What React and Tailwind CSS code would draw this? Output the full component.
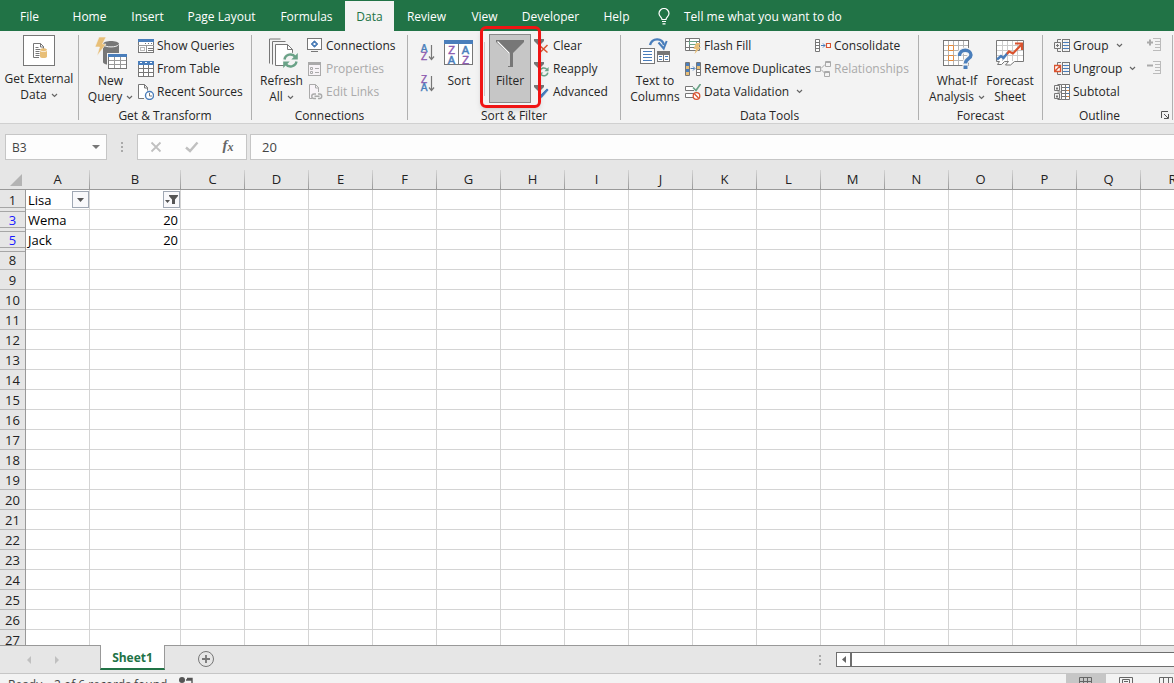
import React from 'react';

const GRAY = '#777777';
const BLUE = '#4a7ebb';
const GREEN = '#6aa287';
const RED = '#d9532f';
const GOLD = '#e8bf78';
const PURPLE = '#8e5bb0';

function Svg({ w = 16, h = 16, children, className = '' }) {
  return (
    <svg
      width={w}
      height={h}
      viewBox={`0 0 ${w} ${h}`}
      fill="none"
      aria-hidden="true"
      className={`block shrink-0 ${className}`}
    >
      {children}
    </svg>
  );
}

function Chevron({ className = '' }) {
  return (
    <Svg w={7} h={5} className={className}>
      <path d="M1 1l2.5 2.4L6 1" stroke="#666" strokeWidth="1.2" />
    </Svg>
  );
}

/* ---------- large ribbon icons ---------- */

function ExternalDataIcon() {
  return (
    <Svg w={32} h={32}>
      <rect x="0.5" y="0.5" width="31" height="30" fill="#fff" stroke={GRAY} />
      <path d="M16 22.5h-5.500v-14h7l3 3v2.500M17.500 8.500v3.500h3.500" stroke={GRAY} />
      <path d="M12.500 12.500h3M12.500 14.500h5M12.500 16.500h4M12.500 18.500h4M12.500 20.500h4" stroke={GRAY} />
      <path d="M17 15c0-2.500 7-2.500 7 0v6.500c0 2-7 2-7 0z" fill={GOLD} />
      <path d="M17 15.200c0 1.800 7 1.800 7 0" stroke="#fff" strokeWidth=".8" />
    </Svg>
  );
}

function NewQueryIcon() {
  return (
    <Svg w={32} h={32}>
      <path d="M8 7c0-4 16-4 16 0v18c0 4-16 4-16 0z" fill={GRAY} />
      <path d="M8.500 7.500c1 3.200 14 3.200 15 0" stroke="#f3f3f3" />
      <path d="M4 0h7L7.500 7H11L2 19l2.500-9H0z" fill={GOLD} stroke="#f3f3f3" strokeWidth=".6" />
      <rect x="12" y="16" width="20" height="16" fill="#f3f3f3" />
      <rect x="13.500" y="19.500" width="18" height="12" fill="#fff" stroke={GRAY} />
      <path d="M13 17h19v3H13z" fill={BLUE} />
      <path d="M19.500 20v11M25.500 20v11M14 23.500h17M14 27.500h17" stroke="#999" />
    </Svg>
  );
}

function RefreshArrows({ x = 0, y = 0, s = 1 }) {
  return (
    <g transform={`translate(${x} ${y}) scale(${s})`}>
      <path d="M1.500 6.500C2.500 1 9.500 0 12.300 4M13.500 8.500C12.500 14 5.500 15 2.700 11" stroke={GREEN} strokeWidth="2.400" />
      <path d="M14.800 0v6.500H8.300zM.2 15V8.500h6.500z" fill={GREEN} />
    </g>
  );
}

function RefreshIcon() {
  return (
    <Svg w={32} h={32}>
      <path d="M3.500 26.500v-24.500h11M6.500 27.500V4.500h13" stroke={GRAY} />
      <path d="M9.500 7.500h12l5 5v16h-17z" fill="#fff" stroke={GRAY} />
      <path d="M21.500 7.500v5h5" stroke={GRAY} />
      <circle cx="24.500" cy="23.500" r="8" fill="#f3f3f3" />
      <RefreshArrows x={17} y={16} />
    </Svg>
  );
}

function SortIcon() {
  return (
    <Svg w={30} h={32}>
      <rect x="0.5" y="3.500" width="28" height="24" fill="#fff" stroke={GRAY} />
      <path d="M0 3h29v4H0z" fill={BLUE} />
      <path d="M14.500 7v21" stroke={GRAY} />
      <g fontFamily="Liberation Sans, sans-serif" fontSize="11" strokeWidth=".5" textAnchor="middle">
        <text x="7.500" y="17" fill={PURPLE} stroke={PURPLE}>Z</text>
        <text x="7.500" y="26.500" fill={BLUE} stroke={BLUE}>A</text>
        <text x="21.500" y="17" fill={BLUE} stroke={BLUE}>A</text>
        <text x="21.500" y="26.500" fill={PURPLE} stroke={PURPLE}>Z</text>
      </g>
    </Svg>
  );
}

function SortOrderIcon({ first, second, firstColor, secondColor }) {
  return (
    <Svg w={16} h={18}>
      <g fontFamily="Liberation Sans, sans-serif" fontSize="10" strokeWidth=".4" textAnchor="middle">
        <text x="4" y="8" fill={firstColor} stroke={firstColor}>{first}</text>
        <text x="4" y="16" fill={secondColor} stroke={secondColor}>{second}</text>
      </g>
      <path d="M11.500 1v14M9 12.500l2.500 3 2.500-3" stroke={GRAY} strokeWidth="1.200" />
    </Svg>
  );
}

function FilterIcon() {
  return (
    <Svg w={28} h={32}>
      <path d="M0 3h28v2L17 16v14h-5V16L0 5z" fill={GRAY} />
      <path d="M1.500 4.500L13 16v13" stroke="#fff" strokeWidth="1.200" />
    </Svg>
  );
}

function TextToColumnsIcon() {
  return (
    <Svg w={32} h={32}>
      <path d="M11 8C13 1 23 0 25 8" stroke={BLUE} strokeWidth="2.400" />
      <path d="M19.500 5.500L24.700 11.500l3-7.500" stroke={BLUE} strokeWidth="2" />
      <rect x="1.500" y="11.500" width="14" height="15" fill="#fff" stroke={GRAY} />
      <path d="M4 14.500h9M4 17.500h9M4 20.500h9M4 23.500h9" stroke={BLUE} />
      <rect x="18.500" y="14.500" width="12" height="10" fill="#fff" stroke={GRAY} />
      <path d="M18 14h13v4H18zM24 17h1v8h-1z" fill={GRAY} />
      <path d="M20 19.500h3M26 19.500h3M20 22.500h3M26 22.500h3" stroke={BLUE} />
    </Svg>
  );
}

function WhatIfIcon() {
  return (
    <Svg w={32} h={32}>
      <rect x="2.500" y="3.500" width="25" height="25" fill="#fff" stroke={GRAY} />
      <path d="M7.500 4v24M12.500 4v24M17.500 4v24M22.500 4v24M3 8.500h24M3 13.500h24M3 18.500h24M3 23.500h24" stroke="#b4b4b4" />
      <path d="M7.500 8.500h5v5h-5zM7.500 18.500h5v5h-5z" fill="#fff" stroke="#e58a3c" />
      <path d="M18.500 19c0-8 11-7 11-1 0 4-5 3.500-5 8.500M24.500 27v5" stroke="#f3f3f3" strokeWidth="6" />
      <path d="M18.500 19c0-8 11.500-7 11.500-1 0 4-5.500 3.500-5.500 8.500" stroke={BLUE} strokeWidth="3.400" />
      <path d="M22.500 28.500h4V32h-4z" fill={BLUE} />
    </Svg>
  );
}

function ForecastIcon() {
  return (
    <Svg w={32} h={32}>
      <path d="M2.500 24.500V3.500h27V24.500H20.500l-4 3.500h-5l3-3.500h-4l-3 3h-4l2-3z" fill="#fff" stroke={GRAY} />
      <path d="M8.500 4v20M13.500 4v20M18.500 4v20M23.500 4v20M3 8.500h26M3 13.500h26M3 18.500h26" stroke="#ccc" />
      <path d="M3 22.500l4-3.500 2.500 2L13.500 16" stroke={BLUE} strokeWidth="2.400" />
      <path d="M13 17l2-2.500 4 2L27 8M21 6.500h7V13" stroke={RED} strokeWidth="2.200" />
    </Svg>
  );
}

/* ---------- small ribbon icons ---------- */

function ShowQueriesIcon() {
  return (
    <Svg>
      <rect x="0.500" y="1.500" width="15" height="13" fill="#fff" stroke={GRAY} />
      <path d="M0 1h16v3H0z" fill={BLUE} />
      <path d="M8.500 7v7M0 7.500h16" stroke="#999" />
      <path d="M7 5.500h1M10 5.500h1M13 5.500h1M10 10.500h5M10 12.500h5" stroke={GRAY} />
      <rect x="2.500" y="9.500" width="4" height="3" stroke="#bbb" />
    </Svg>
  );
}

function FromTableIcon() {
  return (
    <Svg>
      <rect x="0.500" y="0.500" width="15" height="15" fill="#fff" stroke={GRAY} />
      <path d="M5.500 4v11M10.500 4v11M0 7.500h16M0 11.500h16" stroke={GRAY} />
      <path d="M0 0h16v4H0z" fill={BLUE} />
      <path d="M2 1.500h2M7 1.500h2M12 1.500h2" stroke="#fff" />
    </Svg>
  );
}

function RecentSourcesIcon() {
  return (
    <Svg>
      <path d="M6 14.500H.500V.500h6l3 3v3M6.500.500V4H10" fill="#fff" stroke={GRAY} />
      <circle cx="11.500" cy="11.500" r="4" fill="#fff" stroke={BLUE} strokeWidth="1.400" />
      <path d="M11.500 9v3h2.500" stroke={GRAY} />
    </Svg>
  );
}

function ConnectionsIcon() {
  return (
    <Svg>
      <rect x="0.500" y="0.500" width="14" height="11" fill="#fff" stroke={GRAY} />
      <path d="M4 13.500h7M7.500 3l3 3-3 3-3-3z" stroke={GRAY} />
      <path d="M7.500 3.500L10 6 7.500 8.500 5 6z" fill="#fff" stroke={BLUE} strokeWidth="1.600" />
    </Svg>
  );
}

function PropertiesIcon() {
  return (
    <Svg>
      <rect x="1.500" y="1.500" width="12" height="13" fill="#f7f3f7" stroke="#aaa" />
      <path d="M1 1h13v3H1z" fill="#aaa" />
      <path d="M3.500 6.500h2v2h-2zM3.500 10.500h2v2h-2zM8 7.500h4M8 11.500h4" stroke="#aaa" />
    </Svg>
  );
}

function EditLinksIcon() {
  return (
    <Svg>
      <path d="M5 14.500H2.500V.500h6l3 3V8M8.500.500V4H12" fill="#f8f4f8" stroke="#aaa" />
      <path d="M9 10H7a2 2 0 000 4.500h2M11 10h1.500a2 2 0 010 4.500H11M7.500 12.300h5" stroke="#aaa" strokeWidth="1.400" />
    </Svg>
  );
}

function Funnel() {
  return <path d="M-1 1h11v2L6 7v7H4V7L-1 2z" fill={GRAY} />;
}

function ClearIcon() {
  return (
    <Svg>
      <Funnel />
      <path d="M5.500 7.500l8 7M13.500 7l-8 8" stroke={RED} strokeWidth="1.500" />
    </Svg>
  );
}

function ReapplyIcon() {
  return (
    <Svg>
      <Funnel />
      <circle cx="10" cy="10.500" r="5" fill="#f3f3f3" />
      <RefreshArrows x={5} y={6} s={0.65} />
    </Svg>
  );
}

function AdvancedIcon() {
  return (
    <Svg>
      <Funnel />
      <path d="M5 15l1-4 7-7 2 2-7 8z" fill={BLUE} stroke="#f3f3f3" strokeWidth=".7" />
    </Svg>
  );
}

function FlashFillIcon() {
  return (
    <Svg>
      <path d="M.500.500h14v12H.500zM4.500 1v11M1 3.500h13M1 9.500h9" fill="#fff" stroke={GRAY} />
      <rect x="4.500" y="3.500" width="7" height="3" fill="#fff" stroke={GREEN} />
      <path d="M11 5h4.500L13.500 9H16l-6.500 7L11 11H8.500z" fill={GOLD} />
    </Svg>
  );
}

function RemoveDuplicatesIcon() {
  return (
    <Svg>
      <path d="M.500 1.500h4v13h-4zM11.500 1.500h4v13h-4z" fill="#fff" stroke={GRAY} />
      <path d="M1 2h3v3H1zM1 8h3v3H1zM12 2h3v3h-3z" fill={BLUE} />
      <path d="M1 5h3v3H1zM1 11h3v3H1zM12 5h3v3h-3z" fill={GOLD} />
      <path d="M12 8.500h3M12 11.500h3" stroke={GRAY} />
      <path d="M5.500 7.500h4M8 5.500l2 2-2 2" stroke={BLUE} />
    </Svg>
  );
}

function DataValidationIcon() {
  return (
    <Svg>
      <path d="M9 6.500H.500v-4H8M8 13.500H.500v-4H9" fill="#fff" stroke={GRAY} />
      <path d="M8 3.500l3 3L15.500 0" stroke={GREEN} strokeWidth="1.700" />
      <circle cx="11.500" cy="12" r="3.300" fill="#fff" stroke={RED} strokeWidth="1.300" />
      <path d="M9.500 10l4 4" stroke={RED} strokeWidth="1.300" />
    </Svg>
  );
}

function ConsolidateIcon() {
  return (
    <Svg>
      <path d="M.500 1.500h4v12h-4zM.500 4.500h4M.500 7.500h4M.500 10.500h4" fill="#fff" stroke={GRAY} />
      <path d="M6 7.500h4M8 5.500l2 2-2 2" stroke={BLUE} />
      <path d="M11.500 5.500h4v4h-4z" fill="#fff" stroke={RED} strokeWidth="1.200" />
    </Svg>
  );
}

function RelationshipsIcon() {
  return (
    <Svg>
      <path d="M.500 5.500h5v5h-5zM10.500 .500h5v5h-5zM9.500 10.500h5v5h-5zM6 7.500l4-4M6 8.500l4 4" stroke="#aaa" />
      <path d="M.500 6.500h5M10.500 1.500h5M9.500 11.500h5" stroke="#aaa" />
    </Svg>
  );
}

function OutlineList() {
  return (
    <>
      <rect x="8.500" y="1.500" width="7" height="12" fill="#fff" stroke={GRAY} />
      <path d="M9 4.500h6M9 7.500h6M9 10.500h6" stroke={BLUE} />
      <path d="M10 3h4M10 6h4M10 9h4M10 12h4" stroke="#ddd" />
      <path d="M7 1.500H3.500V4M3.500 11v2.500H7" stroke={GRAY} />
    </>
  );
}

function GroupIcon() {
  return (
    <Svg>
      <OutlineList />
      <path d="M.500 4.500h6v6h-6zM2 7.500h3M3.500 6v3" stroke={GRAY} />
    </Svg>
  );
}

function UngroupIcon() {
  return (
    <Svg>
      <OutlineList />
      <path d="M.500 4.500h6v6h-6zM1 10l5-5" fill="#fff" stroke={RED} strokeWidth="1.400" />
    </Svg>
  );
}

function SubtotalIcon() {
  return (
    <Svg>
      <path d="M.500 1.500h5v5h-5zM.500 9.500h5v5h-5zM2 4.500h2M3 3v3M2 12.500h2M3 11v3M3.500 .500h4M3.500 8h4M3.500 15.500h4" stroke={GRAY} />
      <path d="M7.500.500h8v15h-8zM11.500 1v14M8 3.500h7M8 6.500h7M8 9.500h7M8 12.500h7" fill="#fff" stroke={GRAY} />
      <path d="M13 3.500h2M13 9.500h2" stroke={BLUE} />
      <path d="M13 6.500h2M13 12.500h2" stroke="#e58a3c" />
    </Svg>
  );
}

function DetailIcon({ plus }) {
  return (
    <Svg>
      <path d={plus ? 'M0 4.500h6M3 1.500v6' : 'M0 4.500h6'} stroke="#aaa" strokeWidth="2" />
      <path d="M6 .500h8M8 3.500h6M8 6.500h6M8 9.500h6M6 12.500h8" stroke="#bbb" />
      <path d="M13.500 0v13" stroke="#bbb" />
    </Svg>
  );
}

/* ---------- ribbon building blocks ---------- */

function LargeButton({ icon, lines, caret, className = '' }) {
  return (
    <button type="button" className={`flex shrink-0 flex-col items-center whitespace-nowrap ${className}`}>
      {icon}
      <span className="mt-1 block leading-4">
        {lines.map((line, i) => (
          <span key={line} className="flex items-center justify-center">
            {line}
            {caret && i === lines.length - 1 ? <Chevron className="ml-1" /> : null}
          </span>
        ))}
      </span>
    </button>
  );
}

function SmallButton({ icon, label, caret, disabled }) {
  return (
    <button
      type="button"
      disabled={disabled}
      className="flex h-[23px] items-center gap-[3px] whitespace-nowrap disabled:text-[#aaaaaa]"
    >
      {icon}
      <span className="pt-px">{label}</span>
      {caret ? <Chevron className="ml-1" /> : null}
    </button>
  );
}

function RibbonGroup({ title, className = '', children, titleClass = '', corner }) {
  return (
    <section
      className={`flex shrink-0 flex-col ${className}`}
      aria-label={title || 'Get External Data'}
    >
      <div className="flex h-[69px]">{children}</div>
      <div className={`flex h-5 items-center justify-center pt-[5px] ${titleClass}`}>
        {title}
        {corner}
      </div>
    </section>
  );
}

function Divider() {
  return <div className="mt-px h-[85px] w-px shrink-0 bg-[#b0b0b0]" />;
}

const tabs = [
  ['File', 'w-[59px]'],
  ['Home', 'w-[61px]'],
  ['Insert', 'w-[55px]'],
  ['Page Layout', 'w-[93px]'],
  ['Formulas', 'w-[77px]'],
  ['Data', 'w-[49px]'],
  ['Review', 'w-[65px]'],
  ['View', 'w-[51px]'],
  ['Developer', 'w-[81px]'],
  ['Help', 'w-[51px]'],
];

function TabBar() {
  return (
    <nav className="flex h-[31px] shrink-0 overflow-hidden bg-[#217346] pt-px text-white">
      {tabs.map(([name, width]) => (
        <button
          key={name}
          type="button"
          className={`shrink-0 whitespace-nowrap pt-px ${width} ${name === 'Data' ? 'bg-[#f3f3f3] text-[#217346]' : ''}`}
        >
          {name}
        </button>
      ))}
      <button type="button" className="ml-4 flex shrink-0 items-center gap-[14px] whitespace-nowrap pt-px">
        <Svg w={12} h={17}>
          <path
            d="M4 11.500C4 9 1 8.500 1 5.500a5 5 0 0110 0c0 3-3 3.500-3 6zM4 13.500h4M4.500 15.800h3"
            stroke="#fff"
            strokeWidth="1.200"
          />
        </Svg>
        Tell me what you want to do
      </button>
    </nav>
  );
}

function Ribbon() {
  return (
    <div className="flex h-[93px] shrink-0 overflow-x-clip border-b border-[#d0d0d0] bg-[#f3f3f3] pt-[3px]">
      <RibbonGroup className="w-[78px]">
        <LargeButton className="w-full pt-px" icon={<ExternalDataIcon />} lines={['Get External', 'Data']} caret />
      </RibbonGroup>
      <Divider />
      <RibbonGroup title="Get & Transform" className="w-[172px]">
        <LargeButton className="w-[59px] pl-1 pt-[3px]" icon={<NewQueryIcon />} lines={['New', 'Query']} caret />
        <div>
          <SmallButton icon={<ShowQueriesIcon />} label="Show Queries" />
          <SmallButton icon={<FromTableIcon />} label="From Table" />
          <SmallButton icon={<RecentSourcesIcon />} label="Recent Sources" />
        </div>
      </RibbonGroup>
      <Divider />
      <RibbonGroup title="Connections" className="w-[155px]">
        <LargeButton className="w-[55px] pl-1 pt-[3px]" icon={<RefreshIcon />} lines={['Refresh', 'All']} caret />
        <div>
          <SmallButton icon={<ConnectionsIcon />} label="Connections" />
          <SmallButton icon={<PropertiesIcon />} label="Properties" disabled />
          <SmallButton icon={<EditLinksIcon />} label="Edit Links" disabled />
        </div>
      </RibbonGroup>
      <Divider />
      <RibbonGroup title="Sort & Filter" className="w-[212px]">
        <div className="ml-3 flex w-4 flex-col gap-[13px] pt-[10px]">
          <button type="button" aria-label="Sort A to Z">
            <SortOrderIcon first="A" second="Z" firstColor={BLUE} secondColor={PURPLE} />
          </button>
          <button type="button" aria-label="Sort Z to A">
            <SortOrderIcon first="Z" second="A" firstColor={PURPLE} secondColor={BLUE} />
          </button>
        </div>
        <LargeButton className="ml-2 w-[30px] pt-[3px]" icon={<SortIcon />} lines={['Sort']} />
        <div className="ml-[10px] mt-2 h-[54px] w-px bg-[#c8c8c8]" />
        <div className="relative ml-1 w-[42px]">
          <LargeButton
            className="h-[69px] w-full border border-[#8a8a8a] bg-[#c6c6c6] pt-[2px]"
            icon={<FilterIcon />}
            lines={['Filter']}
          />
          <div className="pointer-events-none absolute -left-[9px] -top-2 z-10 h-[82px] w-[61px] rounded-md border-[3px] border-[#f01414] shadow-md" />
        </div>
        <div className="ml-[3px]">
          <SmallButton icon={<ClearIcon />} label="Clear" />
          <SmallButton icon={<ReapplyIcon />} label="Reapply" />
          <SmallButton icon={<AdvancedIcon />} label="Advanced" />
        </div>
      </RibbonGroup>
      <Divider />
      <RibbonGroup title="Data Tools" className="w-[297px]">
        <LargeButton className="ml-2 w-[52px] pt-[3px]" icon={<TextToColumnsIcon />} lines={['Text to', 'Columns']} />
        <div className="ml-1 w-[130px]">
          <SmallButton icon={<FlashFillIcon />} label="Flash Fill" />
          <SmallButton icon={<RemoveDuplicatesIcon />} label="Remove Duplicates" />
          <SmallButton icon={<DataValidationIcon />} label="Data Validation" caret />
        </div>
        <div>
          <SmallButton icon={<ConsolidateIcon />} label="Consolidate" />
          <SmallButton icon={<RelationshipsIcon />} label="Relationships" disabled />
        </div>
      </RibbonGroup>
      <Divider />
      <RibbonGroup title="Forecast" className="w-[123px]">
        <LargeButton className="ml-[9px] w-[58px] pt-[3px]" icon={<WhatIfIcon />} lines={['What-If', 'Analysis']} caret />
        <LargeButton className="w-12 pt-[3px]" icon={<ForecastIcon />} lines={['Forecast', 'Sheet']} />
      </RibbonGroup>
      <Divider />
      <RibbonGroup
        title="Outline"
        className="w-[129px]"
        titleClass="relative pr-4"
        corner={
          <button type="button" aria-label="Outline settings" className="absolute bottom-1 right-[3px]">
            <Svg w={8} h={8}>
              <path d="M.500 7V.500H7M3 3l4 4M7.500 3v4.500H3" stroke="#555" />
            </Svg>
          </button>
        }
      >
        <div className="ml-[11px] w-[93px]">
          <SmallButton icon={<GroupIcon />} label="Group" caret />
          <SmallButton icon={<UngroupIcon />} label="Ungroup" caret />
          <SmallButton icon={<SubtotalIcon />} label="Subtotal" />
        </div>
        <div>
          <button type="button" disabled aria-label="Show Detail" className="flex h-[23px] items-center">
            <DetailIcon plus />
          </button>
          <button type="button" disabled aria-label="Hide Detail" className="flex h-[23px] items-center">
            <DetailIcon />
          </button>
        </div>
      </RibbonGroup>
      <Divider />
    </div>
  );
}

function Dots() {
  return (
    <Svg w={2} h={10}>
      <path d="M0 0h2v2H0zM0 4h2v2H0zM0 8h2v2H0z" fill="#aaa" />
    </Svg>
  );
}

function FormulaBar() {
  return (
    <div className="flex h-[46px] shrink-0 items-start bg-[#e6e6e6] pl-[5px] pt-[10px] text-[13px] text-[#444]">
      <div className="flex h-[26px] w-[102px] shrink-0 items-center border border-[#c6c6c6] bg-[#fdfdfd] px-[6px]">
        <input aria-label="Name Box" defaultValue="B3" className="w-full min-w-0 bg-transparent pt-px text-[12px] outline-none" />
        <button type="button" aria-label="Open name list">
          <Svg w={8} h={4}>
            <path d="M0 0h8L4 4z" fill={GRAY} />
          </Svg>
        </button>
      </div>
      <div className="flex h-[26px] w-[30px] shrink-0 items-center justify-center">
        <Dots />
      </div>
      <div className="flex h-[26px] w-[110px] shrink-0 items-center border border-[#c6c6c6] bg-[#fdfdfd]">
        <button type="button" aria-label="Cancel" className="flex w-9 justify-center">
          <Svg w={12} h={12}>
            <path d="M1.500 1.500l9 9M10.500 1.500l-9 9" stroke="#c0c0c0" strokeWidth="1.800" />
          </Svg>
        </button>
        <button type="button" aria-label="Enter" className="flex w-9 justify-center">
          <Svg w={14} h={12}>
            <path d="M1 6.500l4 3.500 7.500-8.500" stroke="#c0c0c0" strokeWidth="2.400" />
          </Svg>
        </button>
        <button
          type="button"
          aria-label="Insert Function"
          className="flex w-9 items-center justify-center font-['Liberation_Serif',serif] text-[15px] italic leading-4 text-[#666]"
        >
          <b className="pb-1 font-bold">f</b>
          <b className="text-[12px] leading-3">x</b>
        </button>
      </div>
      <input
        aria-label="Formula"
        defaultValue="20"
        className="ml-[3px] h-[26px] min-w-0 flex-1 border border-r-0 border-[#c6c6c6] bg-[#fdfdfd] px-[11px] outline-none"
      />
    </div>
  );
}

const columns = 'ABCDEFGHIJKLMNOPQR'.split('');
const rowNumbers = [1, 3, 5, ...Array.from({ length: 20 }, (_, i) => i + 8)];
const cells = {
  1: { A: 'Lisa' },
  3: { A: 'Wema', B: '20' },
  5: { A: 'Jack', B: '20' },
};

function CellFilter({ active, column }) {
  return (
    <button
      type="button"
      aria-label={`Filter column ${column}`}
      className="ml-auto flex size-[17px] shrink-0 items-center justify-center border border-[#a0a8b4] bg-[#f9f9fb]"
    >
      {active ? (
        <Svg w={13} h={11}>
          <path d="M4 1h9v1L10 5.500V10H7V5.500L4 2zM0 6h5L2.500 9z" fill="#555" />
        </Svg>
      ) : (
        <Svg w={7} h={4}>
          <path d="M0 0h7L3.500 4z" fill="#555" />
        </Svg>
      )}
    </button>
  );
}

function RowHeader({ n }) {
  const hiddenBelow = n <= 5;
  const hiddenAbove = n > 1 && n <= 8;
  return (
    <th scope="row" className="h-5 border-r border-[#999] bg-[#e6e6e6] p-0 font-normal">
      <div
        className={`flex h-5 flex-col text-center leading-[17px] ${n === 3 || n === 5 ? 'text-[#1a1aff]' : 'text-[#222]'}`}
      >
        <div className={hiddenAbove ? 'h-[2px] border-b border-[#a6a6a6]' : 'h-[2px]'} />
        <div className={hiddenBelow ? 'h-4 border-b border-[#a6a6a6]' : 'h-[18px] border-b border-[#b8b8b8]'}>{n}</div>
      </div>
    </th>
  );
}

function Sheet() {
  return (
    <main className="min-h-0 flex-1 overflow-hidden bg-white text-[13px] text-black">
      <table className="w-full min-w-[1205px] table-fixed border-separate border-spacing-0">
        <colgroup>
          <col className="w-[26px]" />
          {columns.map((c) => (
            <col key={c} className={c === 'B' ? 'w-[91px]' : c === 'R' ? '' : 'w-16'} />
          ))}
        </colgroup>
        <thead>
          <tr className="bg-[#e6e6e6]">
            <th className="border-b border-[#999] p-0">
              <button type="button" aria-label="Select all" className="flex h-[19px] w-full items-center justify-end pr-1">
                <Svg w={12} h={12}>
                  <path d="M12 0v12H0z" fill="#b4b4b4" />
                </Svg>
              </button>
            </th>
            {columns.map((c) => (
              <th key={c} scope="col" className="border-b border-[#999] p-0 font-normal text-[#222]">
                <div className="flex h-[19px] items-stretch leading-[19px]">
                  <span className="flex-1">{c}</span>
                  <span className="w-px bg-linear-to-b from-[#d4d4d4] to-[#999]" />
                </div>
              </th>
            ))}
          </tr>
        </thead>
        <tbody>
          {rowNumbers.map((n) => (
            <tr key={n}>
              <RowHeader n={n} />
              {columns.map((c) => {
                const value = cells[n]?.[c];
                const filter = n === 1 && (c === 'A' || c === 'B');
                return (
                  <td key={c} className="h-5 border-b border-r border-[#d4d4d4] p-0">
                    {value || filter ? (
                      <div className={`flex h-[19px] items-center pl-[2px] ${filter ? '' : 'pr-[2px]'} ${c === 'B' ? 'justify-end' : ''}`}>
                        {value ? <span className="pt-[2px] leading-[17px]">{value}</span> : null}
                        {filter ? <CellFilter active={c === 'B'} column={c} /> : null}
                      </div>
                    ) : null}
                  </td>
                );
              })}
            </tr>
          ))}
        </tbody>
      </table>
    </main>
  );
}

function SheetTabs() {
  return (
    <div className="flex h-[29px] shrink-0 border-b border-[#c6c6c6] bg-[#e6e6e6]">
      <div className="flex w-[100px] shrink-0 items-center gap-[22px] border-t border-[#999] pl-[26px]">
        <button type="button" aria-label="Previous sheet">
          <Svg w={6} h={8}>
            <path d="M5 0v8L1 4z" fill="#c0c0c0" />
          </Svg>
        </button>
        <button type="button" aria-label="Next sheet">
          <Svg w={6} h={8}>
            <path d="M1 0v8l4-4z" fill="#c0c0c0" />
          </Svg>
        </button>
      </div>
      <button
        type="button"
        className="h-[25px] w-[65px] shrink-0 border-x border-b-2 border-x-[#999] border-b-[#217346] bg-white pt-[3px] text-[12px] font-bold text-[#217346]"
      >
        Sheet1
      </button>
      <div className="flex flex-1 items-center border-t border-[#999] pb-px pl-8">
        <button type="button" aria-label="New sheet">
          <Svg w={18} h={18}>
            <circle cx="9" cy="9" r="7.500" stroke={GRAY} />
            <path d="M5 9h8M9 5v8" stroke={GRAY} strokeWidth="1.800" />
          </Svg>
        </button>
      </div>
      <div className="flex w-[355px] shrink-0 items-center border-t border-[#999]">
        <Dots />
        <div className="ml-[15px] flex h-[15px] flex-1 border border-r-0 border-[#6e6e6e] bg-white">
          <button type="button" aria-label="Scroll left" className="flex w-[15px] items-center justify-center border-r-2 border-[#6e6e6e]">
            <Svg w={4} h={7}>
              <path d="M4 0v7L0 3.500z" fill="#666" />
            </Svg>
          </button>
        </div>
      </div>
    </div>
  );
}

function StatusBar() {
  return (
    <footer className="h-[9px] shrink-0 overflow-hidden bg-[#f3f3f3]">
      <div className="flex h-[22px] items-center pl-2 text-[#444]">
        <span className="w-[46px]">Ready</span>
        <span className="w-[125px] whitespace-nowrap">2 of 6 records found</span>
        <button type="button" aria-label="Record macro">
          <Svg w={14} h={16}>
            <circle cx="3" cy="3" r="3" fill="#555" />
            <path d="M8 1.500h5V8H2V7M7 3h6" stroke="#555" strokeWidth="1.400" />
          </Svg>
        </button>
        <div className="ml-auto flex">
          <button type="button" aria-label="Normal view" className="flex h-[22px] w-10 items-center justify-center bg-[#c6c6c6]">
            <Svg w={14} h={16}>
              <path d="M.500.500h12v11H.500zM4.500 0v11M8.500 0v11M0 4.500h13M0 8.500h13" stroke="#666" />
            </Svg>
          </button>
          <button type="button" aria-label="Page layout view" className="flex h-[22px] w-10 items-center justify-center">
            <Svg w={14} h={16}>
              <path d="M.500.500h13v11H.500zM3.500 11V2.500h7V11M5 4.500h4M5 6.500h4" stroke="#666" />
            </Svg>
          </button>
          <button type="button" aria-label="Page break view" className="flex h-[22px] w-7 items-center justify-end pr-px">
            <Svg w={14} h={16}>
              <path d="M.500.500h13v11H.500zM4.500 0v8M9.500 0v8" stroke="#666" />
            </Svg>
          </button>
        </div>
      </div>
    </footer>
  );
}

export default function App() {
  return (
    <div className="flex h-screen flex-col overflow-hidden bg-[#e6e6e6] font-['Open_Sans','Noto_Sans',sans-serif] text-[12px] text-[#262626]">
      <TabBar />
      <Ribbon />
      <FormulaBar />
      <Sheet />
      <SheetTabs />
      <StatusBar />
    </div>
  );
}
